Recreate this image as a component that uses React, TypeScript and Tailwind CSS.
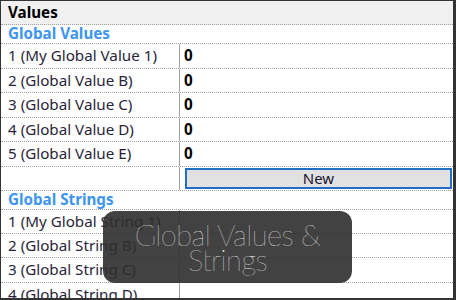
const valueRows = [
  { label: "1 (My Global Value 1)", h: "h-[25px]" },
  { label: "2 (Global Value B)", h: "h-[24px]" },
  { label: "3 (Global Value C)", h: "h-[25px]" },
  { label: "4 (Global Value D)", h: "h-[24px]" },
  { label: "5 (Global Value E)", h: "h-[25px]" },
];

const stringRows = [
  { label: "1 (My Global String 1)", h: "h-[24px]" },
  { label: "2 (Global String B)", h: "h-[24px]" },
  { label: "3 (Global String C)", h: "h-[25px]" },
  { label: "4 (Global String D)", h: "h-[24px]" },
];

function Row({ label, h, value }: { label: string; h: string; value?: string }) {
  return (
    <div className={`flex ${h} border-b border-dotted border-[#a0a0a0]`}>
      <div className="w-[179px] shrink-0 border-r border-solid border-r-[#a0a0a0] pl-[7px] flex items-center text-[#2a1f3a]">
        {label}
      </div>
      <div className="flex-1 pl-[4px] flex items-center font-bold text-black">{value}</div>
    </div>
  );
}

function Section({ title, h }: { title: string; h: string }) {
  return (
    <div className={`${h} border-b border-dotted border-[#a0a0a0] pl-[7px] flex items-center font-bold text-[#3d95f0]`}>
      {title}
    </div>
  );
}

export default function App() {
  return (
    <div
      className="relative w-[456px] h-[300px] overflow-hidden bg-white border-t border-l border-r-[3px] border-b-2 border-[#333] text-[15.2px] leading-none"
      style={{ fontFamily: '"Noto Sans", "Open Sans", sans-serif' }}
    >
      <div className="h-[24px] bg-[#f0f0f0] border-b border-dotted border-[#a0a0a0] pl-[7px] flex items-center font-bold text-black">
        Values
      </div>
      <Section title="Global Values" h="h-[19px]" />
      {valueRows.map((r) => (
        <Row key={r.label} label={r.label} h={r.h} value="0" />
      ))}
      <div className="flex h-[24px] border-b border-dotted border-[#a0a0a0]">
        <div className="w-[179px] shrink-0 border-r border-solid border-r-[#a0a0a0]" />
        <div className="flex-1 pl-[5px] pr-[1px] py-[1px] flex">
          <button className="flex-1 bg-[#e1e1e1] border-2 border-[#1f6fc5] text-[#1a1530] text-[15px] leading-none">
            New
          </button>
        </div>
      </div>
      <Section title="Global Strings" h="h-[19px]" />
      {stringRows.map((r) => (
        <Row key={r.label} label={r.label} h={r.h} />
      ))}

      <div className="absolute left-[102px] top-[210px] w-[249px] h-[72px] rounded-[12px] bg-[#2e2e2e]/90 flex flex-col items-center justify-center text-white">
        <div
          className="text-[29px] leading-[25px] font-thin tracking-[-0.5px]"
          style={{ fontFamily: 'Lato, "Open Sans", sans-serif' }}
        >
          Global Values &amp;
        </div>
        <div
          className="text-[29px] leading-[25px] font-thin tracking-[-0.5px]"
          style={{ fontFamily: 'Lato, "Open Sans", sans-serif' }}
        >
          Strings
        </div>
      </div>
    </div>
  );
}
